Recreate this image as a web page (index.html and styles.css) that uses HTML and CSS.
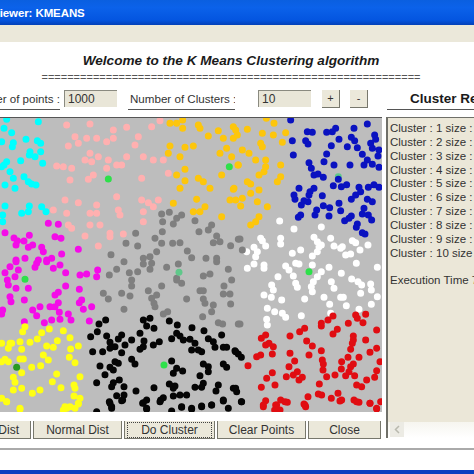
FILE: index.html
```html
<!DOCTYPE html>
<html lang="en">
<head>
  <meta charset="UTF-8">
  <title>Viewer: KMEANS</title>
  <link rel="stylesheet" href="styles.css">
</head>
<body>
  <div class="titlebar"><span class="titlebar_text">Point Viewer: KMEANS</span></div>
  <div class="menubar"></div>

  <div class="main">
    <h1 class="welcome">Welcome to the K Means Clustering algorithm</h1>
    <div class="rule">===========================================================</div>

    <div class="controls">
      <label class="lbl lbl_points"><span>Number of points :</span></label>
      <div class="field field_points">1000</div>
      <label class="lbl lbl_clusters">Number of Clusters :</label>
      <div class="field field_clusters">10</div>
      <button class="btn small plus">+</button>
      <button class="btn small minus">-</button>
      <div class="lbl result_title"><span>Cluster Results</span></div>
    </div>

    <div class="work">
      <div class="left">
        <svg class="plot" viewBox="0 118 382 294" preserveAspectRatio="none">
          <rect x="0" y="117" width="382" height="295" fill="#bdbdbd"/>

          <!-- top left crop -->
          <g transform="translate(0 110) scale(.3333)">
            <path class="pts cyan" d="M20 28h0M115 35h0M12 55h0M35 68h0M5 95h0M40 98h0M78 88h0M112 92h0M122 100h0M37 110h0M122 125h0M90 125h0M105 140h0M88 135h0M128 160h0M62 152h0M20 155h0M12 165h0M5 170h0M30 185h0M40 205h0M45 235h0M15 225h0M72 200h0M85 215h0M108 225h0M95 222h0M15 288h0M88 288h0M125 290h0M138 305h0M85 305h0M65 310h0M8 315h0M8 335h0"/>
            <path class="pts pink" d="M200 45h0M270 42h0M340 60h0M380 52h0M455 50h0M480 32h0M225 80h0M205 108h0M235 100h0M260 85h0M290 85h0M320 95h0M340 85h0M415 80h0M405 105h0M380 140h0M270 130h0M255 150h0M275 155h0M295 140h0M325 150h0M320 175h0M350 165h0M365 165h0M430 140h0M460 150h0M490 150h0M170 168h0M190 170h0M215 175h0M280 195h0M265 208h0M210 210h0M425 205h0M505 190h0M350 260h0M195 270h0M235 278h0M290 285h0M270 310h0M290 310h0M200 310h0M160 300h0M355 300h0M360 315h0M425 270h0M445 278h0M475 270h0M430 335h0M460 290h0M205 345h0M215 355h0M270 345h0M300 345h0M330 370h0M330 380h0M255 378h0M295 408h0M370 372h0M430 305h0"/>
            <path class="pts orange" d="M510 40h0M530 40h0M548 30h0M548 55h0M595 45h0M600 55h0M625 78h0M655 62h0M700 50h0M700 85h0M670 85h0M510 108h0M505 130h0M555 112h0M580 108h0M680 115h0M660 130h0M540 140h0M695 140h0M715 165h0M665 195h0M555 178h0M530 195h0M555 212h0M595 205h0M610 215h0M630 235h0M540 235h0M700 238h0M590 268h0M690 270h0M520 280h0M615 290h0M600 305h0M580 305h0M665 320h0"/>
            <path class="pts gray" d="M485 312h0M508 307h0M545 315h0M530 325h0M488 335h0M520 342h0M585 332h0M635 345h0M625 360h0M407 370h0M487 365h0M465 385h0M378 400h0M413 408h0M485 400h0M518 400h0M540 398h0M597 365h0M650 378h0M660 395h0M640 398h0M692 407h0M715 388h0M470 425h0M562 423h0M333 434h0M450 440h0M430 445h0M575 443h0M618 445h0M650 445h0"/>
            <path class="pts magenta" d="M145 340h0M175 343h0M15 368h0M42 384h0M88 376h0M52 392h0M48 405h0M72 393h0M165 380h0M183 385h0M98 405h0M85 412h0M125 412h0M130 425h0M235 418h0M185 432h0M48 450h0M75 445h0M115 450h0M140 450h0M155 445h0"/>
            <path class="pts green" d="M325 207h0M688 170h0"/>
          </g>

          <!-- top right crop -->
          <g transform="translate(234 110) scale(.3333)">
            <path class="pts pale" d="M313 200h0"/>
            <path class="pts blue" d="M170 30h0M400 42h0M360 55h0M305 55h0M278 67h0M295 65h0M220 65h0M235 67h0M175 92h0M215 92h0M222 102h0M315 88h0M292 107h0M352 82h0M362 92h0M422 75h0M425 88h0M410 100h0M340 110h0M370 113h0M415 115h0M435 120h0M178 135h0M278 132h0M385 133h0M432 138h0M270 155h0M225 158h0M300 165h0M348 165h0M400 150h0M390 165h0M415 163h0M435 172h0M232 175h0M240 195h0M252 192h0M268 202h0M313 208h0M298 227h0M322 230h0M338 224h0M195 235h0M240 235h0M228 245h0M225 255h0M180 255h0M183 268h0M265 257h0M375 232h0M380 245h0M365 255h0M352 268h0M403 232h0M420 224h0M435 232h0M400 268h0M415 275h0M210 272h0M222 275h0M202 285h0M268 287h0M287 293h0M315 280h0M248 300h0M243 315h0M320 302h0M390 295h0M385 312h0M403 315h0M413 330h0M200 315h0M193 322h0M285 318h0M352 318h0M345 325h0M332 332h0M370 342h0M367 352h0M385 368h0M393 372h0"/>
            <path class="pts orange" d="M97 25h0M120 40h0M40 58h0M85 70h0M118 75h0M155 68h0M10 75h0M5 60h0M145 97h0M80 100h0M85 110h0M25 120h0M45 130h0M65 150h0M95 150h0M95 170h0M12 165h0M140 165h0M90 185h0M75 195h0M140 200h0M130 215h0M40 215h0M50 222h0M75 240h0M0 235h0M50 250h0M25 265h0M5 270h0M70 275h0M20 288h0M100 290h0M75 320h0M65 335h0M50 345h0"/>
            <path class="pts white" d="M137 333h0M180 357h0M262 351h0M290 385h0M240 382h0M140 385h0M140 402h0M80 385h0M85 392h0M60 412h0M95 408h0M38 425h0M70 425h0M65 440h0M175 430h0M200 420h0M235 438h0M250 395h0M255 410h0M262 405h0M250 425h0M300 408h0M325 410h0M320 415h0M355 392h0M365 398h0M402 405h0M378 420h0M335 435h0M350 432h0"/>
            <path class="pts gray" d="M18 387h0M25 420h0"/>
          </g>

          <!-- bottom left crop -->
          <g transform="translate(0 260) scale(.3333)">
            <path class="pts magenta" d="M48 5h0M30 20h0M15 38h0M55 30h0M45 50h0M22 60h0M25 75h0M48 85h0M85 85h0M110 10h0M105 22h0M140 5h0M160 25h0M180 15h0M197 38h0M240 45h0M260 42h0M293 30h0M290 50h0M197 78h0M238 88h0M175 97h0M165 105h0M30 110h0M33 125h0M73 120h0M245 120h0M238 128h0M175 128h0M150 140h0M165 140h0M120 140h0M98 150h0M110 167h0M8 150h0M5 162h0M178 157h0M275 140h0M250 148h0M205 162h0M213 180h0M180 178h0M155 180h0M133 188h0M73 185h0M268 183h0"/>
            <path class="pts gray" d="M328 45h0M350 28h0M372 5h0M388 38h0M413 35h0M430 12h0M455 10h0M450 28h0M500 22h0M395 60h0M395 78h0M485 78h0M445 92h0M365 100h0M390 108h0M310 100h0M325 117h0M470 105h0M455 115h0M462 130h0M465 140h0M372 148h0M560 117h0M610 92h0M600 92h0M610 117h0M615 130h0M640 135h0M635 155h0M608 170h0M490 162h0M503 155h0M655 188h0M668 192h0M715 192h0M530 60h0M545 70h0M530 55h0M610 48h0M630 42h0M672 78h0M695 60h0M670 102h0M690 102h0M692 132h0M535 12h0M650 5h0M685 28h0"/>
            <path class="pts pale" d="M537 37h0"/>
            <path class="pts black" d="M297 192h0M317 180h0M430 180h0M450 175h0M440 198h0M462 205h0M508 183h0M532 195h0M576 203h0M612 212h0M665 225h0M292 215h0M272 230h0M320 228h0M365 225h0M355 237h0M330 247h0M395 240h0M420 220h0M432 243h0M478 245h0M460 255h0M515 236h0M530 220h0M540 228h0M550 240h0M570 238h0M585 250h0M625 236h0M640 245h0M645 262h0M670 262h0M680 262h0M705 272h0M715 282h0M278 275h0M308 275h0M345 260h0M330 265h0M375 255h0M430 260h0M420 268h0M365 278h0M575 270h0M595 270h0M605 275h0M345 305h0M355 310h0M395 298h0M405 312h0M300 318h0M330 322h0M340 330h0M515 303h0M520 340h0M530 325h0M548 333h0M610 312h0M625 320h0M625 335h0M670 312h0M680 322h0M600 347h0M315 344h0M358 360h0M290 368h0M340 368h0M335 380h0M372 380h0M408 393h0M462 383h0M508 372h0M525 378h0M520 385h0M610 370h0M605 382h0M585 382h0M655 375h0M648 393h0M700 385h0M350 407h0M372 405h0M368 420h0M560 405h0M520 408h0M540 405h0M482 420h0M490 413h0M440 420h0M428 430h0M670 420h0M328 425h0M335 440h0M440 445h0M545 440h0M575 445h0M605 440h0M635 435h0M685 445h0"/>
            <path class="pts yellow" d="M75 200h0M68 215h0M148 207h0M190 212h0M125 218h0M112 237h0M210 233h0M90 247h0M60 245h0M172 242h0M30 250h0M25 265h0M35 250h0M5 250h0M140 258h0M160 262h0M65 268h0M212 267h0M235 258h0M130 285h0M145 300h0M208 292h0M225 308h0M60 297h0M15 298h0M5 305h0M25 305h0M70 297h0M122 317h0M95 322h0M65 338h0M170 342h0M240 350h0M40 352h0M45 367h0M157 365h0M222 375h0M225 385h0M65 385h0M40 390h0M120 390h0M97 400h0M183 383h0M222 408h0M240 415h0M20 425h0M5 415h0M60 445h0M195 440h0M210 440h0M235 432h0M225 445h0"/>
            <path class="pts green" d="M492 315h0M75 58h0"/>
            <path class="pts dark_green" d="M50 322h0"/>
          </g>

          <!-- bottom right crop -->
          <g transform="translate(234 260) scale(.3333)">
            <path class="pts white" d="M40 25h0M60 12h0M90 15h0M90 25h0M155 18h0M165 30h0M185 10h0M195 12h0M178 48h0M132 50h0M235 15h0M285 22h0M367 10h0M430 22h0M322 40h0M262 35h0M250 50h0M238 65h0M292 65h0M353 57h0M372 65h0M383 75h0M410 72h0M412 90h0M380 100h0M300 85h0M232 80h0M235 95h0M185 70h0M190 82h0M113 75h0M118 90h0M90 105h0M112 112h0M143 120h0M212 117h0M270 112h0M320 112h0M328 112h0M430 110h0M287 133h0M337 137h0M412 133h0M100 145h0M122 155h0M145 160h0M155 172h0M202 167h0M98 178h0M100 195h0M290 160h0M375 148h0"/>
            <path class="pts green" d="M225 35h0"/>
            <path class="pts gray" d="M18 192h0"/>
            <path class="pts red" d="M297 168h0M282 180h0M262 190h0M262 198h0M343 190h0M365 165h0M370 175h0M395 163h0M387 188h0M212 205h0M197 215h0M168 228h0M310 208h0M297 222h0M428 210h0M95 225h0M82 235h0M358 228h0M358 240h0M355 250h0M395 240h0M218 243h0M235 258h0M105 250h0M95 255h0M118 260h0M115 282h0M262 272h0M350 268h0M428 265h0M408 277h0M168 280h0M80 285h0M68 290h0M225 285h0M42 317h0M342 292h0M375 292h0M265 300h0M182 303h0M323 305h0M165 320h0M268 312h0M358 312h0M350 320h0M438 305h0M322 327h0M267 330h0M345 335h0M428 332h0M115 338h0M190 335h0M178 345h0M157 350h0M278 350h0M303 345h0M335 347h0M362 347h0M205 352h0M195 360h0M98 355h0M422 352h0M398 360h0M256 372h0M123 375h0M82 382h0M368 375h0M383 380h0M253 402h0M263 405h0M222 410h0M312 400h0M292 415h0M323 420h0M360 420h0M375 427h0M408 430h0M440 425h0M95 422h0M140 420h0M160 427h0M125 435h0M210 432h0M88 440h0M122 450h0M138 450h0M428 447h0M215 440h0"/>
            <path class="pts black" d="M5 275h0M22 292h0M5 385h0M8 395h0M22 425h0"/>
          </g>

          <!-- bottom strip crop -->
          <g transform="translate(0 400) scale(.3333)">
            <path class="pts yellow" d="M60 28h0M20 5h0M200 25h0M235 10h0M190 30h0"/>
            <path class="pts black" d="M330 10h0M335 25h0M365 2h0M430 8h0M440 28h0M480 5h0M290 35h0M515 33h0M545 22h0M575 28h0M605 18h0M635 15h0M670 3h0M725 5h0"/>
            <path class="pts red" d="M790 15h0M830 15h0M855 5h0M915 15h0M1020 3h0M1070 5h0M1110 10h0M1130 25h0M830 30h0"/>
          </g>
        </svg>

        <div class="actions">
          <button class="btn action dist">Uniform Dist</button>
          <button class="btn action normal">Normal Dist</button>
          <button class="btn action docluster"><span class="focus">Do Cluster</span></button>
          <button class="btn action clear">Clear Points</button>
          <button class="btn action close">Close</button>
        </div>
      </div>

      <div class="panel">
        <div class="panel_text">
          <div class="line">Cluster : 1 size : 92</div>
          <div class="line">Cluster : 2 size : 118</div>
          <div class="line">Cluster : 3 size : 86</div>
          <div class="line">Cluster : 4 size : 97</div>
          <div class="line">Cluster : 5 size : 74</div>
          <div class="line">Cluster : 6 size : 103</div>
          <div class="line">Cluster : 7 size : 121</div>
          <div class="line">Cluster : 8 size : 110</div>
          <div class="line">Cluster : 9 size : 95</div>
          <div class="line">Cluster : 10 size : 104</div>
          <div class="line exec">Execution Time 78 ms</div>
        </div>
        <div class="hscroll"><span class="arrow">
          <svg width="6" height="9" viewBox="0 0 6 9"><path d="M5 1 1.5 4.5 5 8" fill="none" stroke="#b9b9ae" stroke-width="1.5"/></svg>
        </span></div>
      </div>
    </div>
  </div>

  <div class="status"></div>
  <div class="bottombar"></div>
</body>
</html>
```
FILE: styles.css
```css
*{margin:0;padding:0;box-sizing:border-box;}
html,body{width:474px;height:474px;overflow:hidden;}
body{background:#fff;font-family:"Liberation Sans",Arial,sans-serif;color:#222;display:flex;flex-direction:column;}

.titlebar{height:25px;flex:none;background:linear-gradient(#0a5fe0 0,#0b62ea 30%,#0455e0 80%,#0340b8 100%);display:flex;align-items:center;padding-top:1px;}
.titlebar_text{margin-left:-39px;color:#fff;font-size:11.5px;font-weight:bold;white-space:nowrap;letter-spacing:-.1px;}
.menubar{height:17px;flex:none;background:#ebe8da;}

.main{flex:1;display:flex;flex-direction:column;min-height:0;}
.welcome{margin-top:11px;height:16px;text-align:center;font-size:13.6px;line-height:16px;font-weight:bold;font-style:italic;color:#1a1a1a;padding-right:12px;}
.rule{margin-top:2px;height:12px;text-align:center;font-size:11px;line-height:12px;white-space:nowrap;color:#555;padding-right:12px;overflow:hidden;}

.controls{display:flex;align-items:flex-start;margin-top:6px;height:28px;flex:none;}
.lbl{height:21px;font-size:11.6px;line-height:19px;border-bottom:1px solid #555;white-space:nowrap;color:#333;display:flex;overflow:hidden;}
.lbl_points{width:60px;justify-content:flex-end;flex:none;}
.field{height:17px;background:#e9e6d8;border-top:1px solid #8a8a80;border-left:1px solid #8a8a80;font-size:12px;line-height:16px;padding-left:3px;color:#333;flex:none;}
.field_points{width:53px;margin-left:4px;margin-top:1px;}
.lbl_clusters{width:107px;margin-left:11px;flex:none;padding-left:2px;}
.field_clusters{width:53px;margin-left:23px;margin-top:1px;}
.btn{background:#ebe8da;border:0;border-right:1px solid #77776c;border-bottom:1px solid #77776c;font-family:inherit;color:#333;flex:none;}
.small{width:18px;height:18px;font-size:11px;line-height:15px;margin-top:1px;}
.plus{margin-left:11px;}
.minus{margin-left:10px;}
.result_title{margin-left:19px;width:88px;padding-left:23px;flex:none;font-size:13.5px;font-weight:bold;color:#1a1a1a;}

.work{display:grid;grid-template-columns:382px 88px;column-gap:4px;}
.left{display:flex;flex-direction:column;}
.plot{display:block;width:382px;height:295px;filter:blur(.35px);border-top:1px solid #555;}
.pts{fill:none;stroke-width:21;stroke-linecap:round;}
.cyan{stroke:#0ff;}
.pink{stroke:#ffb0b0;}
.orange{stroke:#fdc60c;}
.gray{stroke:#7f7f7f;}
.magenta{stroke:#f40ce8;}
.blue{stroke:#0a12c0;}
.white{stroke:#fff;}
.black{stroke:#050505;}
.yellow{stroke:#ffff14;}
.red{stroke:#e00d12;}
.green{stroke:#2ee04a;}
.pale{stroke:#5fc88a;}
.dark_green{stroke:#2a9a20;}

.actions{display:flex;gap:2px;margin-top:9px;}
.action{height:18px;font-size:12px;line-height:16px;border-left:1px solid #77776c;white-space:nowrap;}
.dist{width:90px;margin-left:-59px;}
.normal{width:89px;}
.docluster{width:91px;padding:1px 2px;}
.focus{display:block;height:16px;border:1px dotted #444;line-height:14px;}
.clear{width:89px;}
.close{width:73px;}

.panel{height:321px;border-left:2px solid #6f6f68;border-top:1px solid #6f6f68;background:#ebe7d8;display:flex;flex-direction:column;}
.panel_text{flex:1;padding:3px 0 0 2px;font-size:11.5px;overflow:hidden;white-space:nowrap;color:#333;}
.line{height:13.85px;line-height:14px;}
.exec{margin-top:14px;}
.hscroll{height:16px;flex:none;background:linear-gradient(#f6f5ef,#fff);display:flex;padding-left:2px;}
.arrow{width:14px;height:15px;background:#ecebe4;display:flex;align-items:center;justify-content:center;}

.status{flex:none;height:22px;border-top:2px solid #aaa;background:#fff;}
.bottombar{flex:none;height:4px;background:#0a3fc0;}
```
